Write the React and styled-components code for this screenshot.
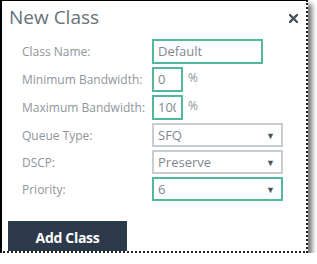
import React from 'react'
import styled, { createGlobalStyle } from 'styled-components'

const GlobalStyle = createGlobalStyle`
  html, body {
    margin: 0;
    background: #fff;
    font-family: 'Open Sans', 'Liberation Sans', sans-serif;
  }
`

const fields = [
    { label: 'Class Name:', kind: 'text', value: 'Default', active: true },
    { label: 'Minimum Bandwidth:', kind: 'percent', value: '0', active: true },
    { label: 'Maximum Bandwidth:', kind: 'percent', value: '100', active: true },
    { label: 'Queue Type:', kind: 'select', value: 'SFQ' },
    { label: 'DSCP:', kind: 'select', value: 'Preserve' },
    { label: 'Priority:', kind: 'select', value: '6', active: true },
]

function App() {
    return (
        <>
            <GlobalStyle />
            <Sheet>
                <Header>
                    <Title>New Class</Title>
                    <Close aria-label="close">
                        <svg width="9" height="9" viewBox="0 0 9 9">
                            <path d="M1 1 L8 8 M8 1 L1 8" stroke="#46525c" strokeWidth="2.4" strokeLinecap="square" />
                        </svg>
                    </Close>
                </Header>
                <Form>
                    {fields.map((f) => (
                        <React.Fragment key={f.label}>
                            <Label>{f.label}</Label>
                            {f.kind === 'text' && <TextBox $active={f.active}>{f.value}</TextBox>}
                            {f.kind === 'percent' && (
                                <PercentRow>
                                    <NumberBox $active={f.active}>
                                        <NumberValue>{f.value}</NumberValue>
                                    </NumberBox>
                                    <Unit>%</Unit>
                                </PercentRow>
                            )}
                            {f.kind === 'select' && (
                                <SelectBox $active={f.active}>
                                    <span>{f.value}</span>
                                    <Caret>▼</Caret>
                                </SelectBox>
                            )}
                        </React.Fragment>
                    ))}
                </Form>
                <AddButton>Add Class</AddButton>
            </Sheet>
        </>
    )
}

export default App

const Sheet = styled.div`
    box-sizing: border-box;
    width: 308px;
    height: 253px;
    overflow: hidden;
    background: #fff;
    border-left: 2px solid #000;
    border-top: 1px solid #000;
    border-right: 2px dotted #222;
    border-bottom: 2px dotted #222;
    box-shadow: 4px 4px 5px rgba(0, 0, 0, 0.55);
`

const Header = styled.div`
    display: flex;
    justify-content: space-between;
    align-items: flex-start;
    padding: 2px 8px 0 7px;
    height: 30px;
`

const Title = styled.h1`
    margin: 0;
    font-size: 19px;
    line-height: 28px;
    font-weight: 400;
    color: #66717a;
`

const Close = styled.span`
    display: flex;
    margin-top: 11px;
`

const Form = styled.div`
    display: grid;
    grid-template-columns: 130px 131px;
    row-gap: 3px;
    align-items: center;
    padding: 6px 0 0 20px;
`

const Label = styled.div`
    font-size: 12px;
    color: #8f959a;
    white-space: nowrap;
`

const boxBorder = (p) => (p.$active ? '#4fb89e' : '#c9cdd0')

const TextBox = styled.div`
    box-sizing: border-box;
    width: 111px;
    height: 25px;
    border: 2px solid ${boxBorder};
    padding: 0 4px;
    font-size: 13px;
    line-height: 21px;
    color: #80888f;
`

const PercentRow = styled.div`
    display: flex;
    align-items: center;
    gap: 5px;
`

const NumberBox = styled.div`
    box-sizing: border-box;
    width: 31px;
    height: 25px;
    border: 2px solid ${boxBorder};
    padding: 0 0 0 4px;
    font-size: 13px;
    line-height: 21px;
    color: #80888f;
`

const NumberValue = styled.span`
    display: block;
    width: 18px;
    overflow: hidden;
    white-space: nowrap;
`

const Unit = styled.span`
    font-size: 12px;
    color: #8f959a;
    margin-top: -4px;
`

const SelectBox = styled.div`
    box-sizing: border-box;
    display: flex;
    justify-content: space-between;
    align-items: center;
    width: 131px;
    height: 24px;
    border: 2px solid ${boxBorder};
    padding: 0 6px 0 4px;
    font-size: 13px;
    color: #80888f;
`

const Caret = styled.span`
    font-size: 9px;
    color: #4a545c;
`

const AddButton = styled.button`
    display: block;
    margin: 20px 0 0 6px;
    width: 119px;
    height: 32px;
    border: none;
    background: #2c3a4b;
    color: #fff;
    font-family: 'Open Sans', 'Liberation Sans', sans-serif;
    font-size: 14px;
    font-weight: 700;
    letter-spacing: -0.3px;
    padding: 0;
`
